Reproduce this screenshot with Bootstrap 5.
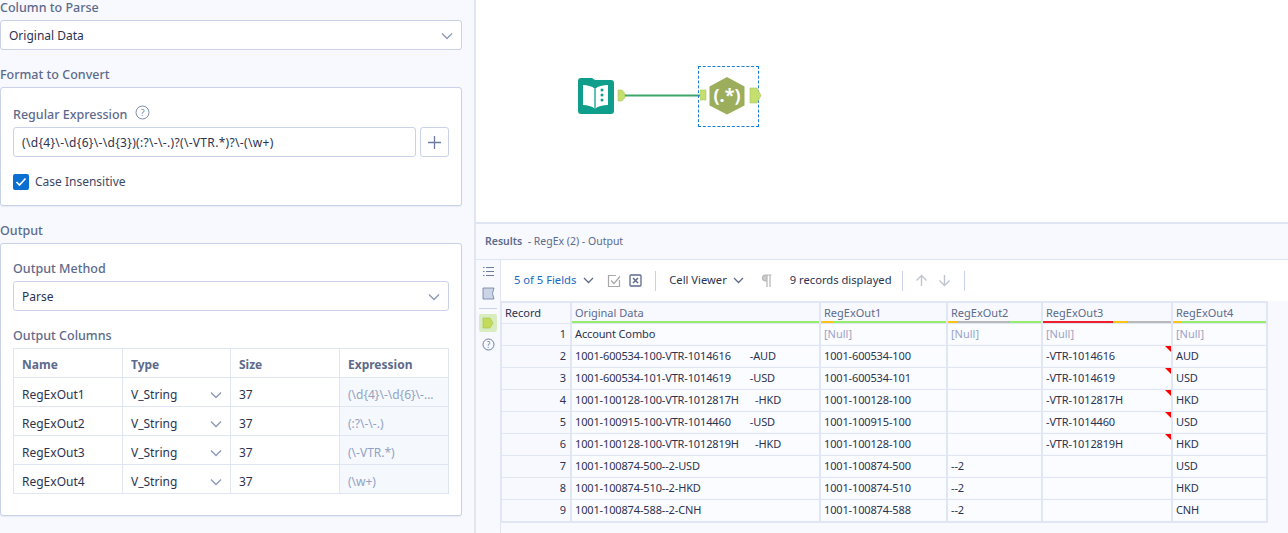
<!DOCTYPE html>
<html lang="en">
<head>
    <meta charset="UTF-8">
    <meta name="viewport" content="width=device-width, initial-scale=1.0">
    <title>RegEx Results</title>
    <link href="https://cdn.jsdelivr.net/npm/bootstrap@5.3.0/dist/css/bootstrap.min.css" rel="stylesheet">
    <style>
        html, body { height: 533px; overflow: hidden; }
        body { font-family: "Noto Sans", "Open Sans", sans-serif; font-size: 12px; color: #2b3350; background: #f7f9fe; }
        .app { width: 1288px; height: 533px; }
        .config { width: 476px; height: 533px; flex: none; padding-right: 12px; border-right: 2px solid #dfe5f1; }
        .sec-label { color: #5d6a8c; font-size: 12.5px; font-weight: 500; line-height: 14px; height: 14px; margin: 0; }
        .field-label { color: #5d6a8c; font-size: 12.5px; font-weight: 500; line-height: 14px; margin: 0 0 5px; }
        .box { background: #fff; border: 1px solid #c9d2e8; border-radius: 3px; height: 30px; padding: 2px 8px 0; line-height: 26px; font-size: 12px; }
        .box svg { flex: none; }
        .panel { background: #fff; border: 1px solid #c9d2e8; border-radius: 3px; padding: 0 12px; box-shadow: 0 1px 1px #e6eaf4; }
        .regex-input { width: 403px; font-size: 12px; letter-spacing: .32px; }
        .plus { width: 29px; height: 30px; margin-left: 4px; }
        .check { width: 16px; height: 16px; background: #0b6ed1; border-radius: 2px; }
        .cols { width: 435px; border-collapse: collapse; table-layout: fixed; font-size: 12px; }
        .cols th, .cols td { border: 1px solid #dfe5f1; height: 29px; padding: 6px 8px 0; white-space: nowrap; }
        .cols th { color: #5d6a8c; font-weight: 700; padding-top: 3px; }
        .cols .expr { background: #f5f8fd; color: #93a2c3; }
        .main { width: 812px; }
        .canvas { height: 222px; background: #fff; position: relative; }
        .node { position: absolute; }
        .results-head { height: 38px; padding-left: 9px; background: #f7f9fe; border-top: 2px solid #dfe5f1; border-bottom: 1px solid #dfe5f1; color: #5d6a8c; font-size: 10.5px; }
        .results-head b { font-weight: 600; }
        .side { width: 25px; flex: none; border-right: 1px solid #dfe5f1; padding-top: 6px; }
        .side hr { width: 18px; margin: 8px 0 5px; border-color: #c9d2e8; opacity: 1; }
        .side .sel { width: 18px; height: 18px; background: #d8ecbf; border-radius: 2px; }
        .toolbar { height: 41px; background: #fff; padding-left: 13px; font-size: 11.2px; }
        .sep { width: 1px; height: 20px; background: #c9d2e8; }
        .fields { color: #1769c2; }
        .grid { border-collapse: collapse; table-layout: fixed; width: 766px; font-size: 11px; line-height: 14px; margin-left: -1px; }
        .grid th, .grid td { border: 2px solid #e0e6f3; height: 22px; padding: 0 3px; white-space: nowrap; position: relative; background: #fbfcff; }
        .grid th { background: #f7f9fe; color: #5d6a8c; font-weight: 400; }
        .grid .rec { background: #f7f9fe; text-align: right; padding-right: 4px; }
        .grid th.rec { text-align: left; color: #2b3350; }
        .grid tbody tr { position: relative; top: -1px; }
        .null { color: #9aa3c7; }
        .bar { position: absolute; left: 0; right: 0; bottom: 0; height: 2px; display: flex; }
        .bar i { display: block; height: 2px; }
        .g { background: #96ee6f; } .y { background: #fcc419; } .s { background: #b9b9b9; } .r { background: #f0202a; }
        .flag::after { content: ""; position: absolute; top: 0; right: 0; border-top: 6px solid #f00; border-left: 6px solid transparent; }
        .pre { white-space: pre; letter-spacing: -.14px; }
    </style>
</head>
<body>
<div class="app d-flex">
    <div class="config">
        <p class="sec-label" style="margin-top:1px">Column to Parse</p>
        <div class="box d-flex justify-content-between align-items-center" style="margin-top:5px">
            <span>Original Data</span>
            <svg width="12" height="8" viewBox="0 0 12 8"><path d="M1 1.500l5 5 5-5" fill="none" stroke="#8a97b5" stroke-width="1.300"/></svg>
        </div>
        <p class="sec-label" style="margin-top:18px">Format to Convert</p>
        <div class="panel" style="height:119px;margin-top:5px">
            <div class="d-flex align-items-center" style="margin-top:20px;height:14px">
                <span class="sec-label">Regular Expression</span>
                <svg class="ms-2" width="15" height="15" viewBox="0 0 15 15" style="margin-top:-5px"><circle cx="7.500" cy="7.500" r="6.500" fill="none" stroke="#7d8bad"/><text x="7.500" y="11" text-anchor="middle" font-size="9.500" fill="#7d8bad">?</text></svg>
            </div>
            <div class="d-flex" style="margin-top:5px">
                <div class="box regex-input">(\d{4}\-\d{6}\-\d{3})(:?\-\-.)?(\-VTR.*)?\-(\w+)</div>
                <div class="box plus d-flex align-items-center justify-content-center p-0">
                    <svg width="15" height="15" viewBox="0 0 15 15"><path d="M7.500 1v13M1 7.500h13" stroke="#6d7b9c" stroke-width="1.300"/></svg>
                </div>
            </div>
            <div class="d-flex align-items-center" style="margin-top:16px">
                <span class="check d-flex align-items-center justify-content-center">
                    <svg width="12" height="10" viewBox="0 0 12 10"><path d="M1.500 5l3 3 6-6.500" fill="none" stroke="#fff" stroke-width="1.700"/></svg>
                </span>
                <span style="color:#3d4866;margin-left:6px">Case Insensitive</span>
            </div>
        </div>
        <p class="sec-label" style="margin-top:18px">Output</p>
        <div class="panel" style="height:273px;margin-top:5px">
            <p class="field-label" style="margin-top:18px">Output Method</p>
            <div class="box d-flex justify-content-between align-items-center">
                <span>Parse</span>
                <svg width="12" height="8" viewBox="0 0 12 8"><path d="M1 1.500l5 5 5-5" fill="none" stroke="#8a97b5" stroke-width="1.300"/></svg>
            </div>
            <p class="field-label" style="margin-top:18px">Output Columns</p>
            <table class="cols">
                <colgroup><col style="width:109px"><col style="width:108px"><col style="width:109px"><col style="width:109px"></colgroup>
                <thead><tr><th>Name</th><th>Type</th><th>Size</th><th>Expression</th></tr></thead>
                <tbody id="colsBody"></tbody>
            </table>
        </div>
    </div>

    <div class="main d-flex flex-column">
        <div class="canvas">
            <svg class="node" style="left:100px;top:75px" width="130" height="42" viewBox="0 0 130 42">
                <path d="M2 6a3 3 0 0 1 3-3h11l3 2h16a3 3 0 0 1 3 3v28a3 3 0 0 1-3 3H5a3 3 0 0 1-3-3z" fill="#0f9e8b"/>
                <path d="M7 10c4 0 9 1 12 4c3-3 8-4 13-4v20c-5 0-10 1-13 4c-3-3-8-4-12-4z" fill="#fff"/>
                <path d="M19 14v20" stroke="#0f9e8b" stroke-width="1.300"/>
                <circle cx="26" cy="15" r="1.500" fill="#0f9e8b"/><circle cx="26" cy="20" r="1.500" fill="#0f9e8b"/><circle cx="26" cy="25" r="1.500" fill="#0f9e8b"/>
                <path d="M42 15h4l3 3.500v4l-3 3.500h-4z" fill="#c5df6e" stroke="#a9c46a" stroke-width=".6"/>
                <path d="M49 20.500h76" stroke="#3fa66b" stroke-width="1.800"/>
            </svg>
            <div class="node" style="left:222px;top:66px;width:61px;height:61px;border:1px dashed #1b7fd1"></div>
            <svg class="node" style="left:224px;top:75px" width="64" height="42" viewBox="0 0 64 42">
                <rect x="0" y="15" width="6" height="10" fill="#c5df6e" stroke="#a9c46a" stroke-width=".6"/>
                <path d="M27 2l17.500 9.500v19L27 39.500 9.500 30.500v-19z" fill="#9cae5c"/>
                <text x="27" y="27" text-anchor="middle" font-size="18" font-weight="700" fill="#fff" font-family="Noto Sans, sans-serif">(.*)</text>
                <path d="M50 13h7l4 7.500-4 7.500h-7z" fill="#c5df6e" stroke="#a9c46a" stroke-width=".6"/>
            </svg>
        </div>
        <div class="results-head d-flex align-items-center"><span><b>Results</b> &nbsp;- RegEx (2) - Output</span></div>
        <div class="d-flex flex-grow-1">
            <div class="side d-flex flex-column align-items-center">
                <svg width="13" height="11" viewBox="0 0 13 11"><path d="M1 1.500h1.500M4 1.500h8M1 5.500h1.500M4 5.500h8M1 9.500h1.500M4 9.500h8" stroke="#6d7b9c"/></svg>
                <svg style="margin-top:10px" width="13" height="13" viewBox="0 0 13 13"><path d="M1 1h11l-1.500 5.500L12 12H1z" fill="#ccd5e8" stroke="#6d7b9c" stroke-width=".8"/></svg>
                <hr>
                <div class="sel d-flex align-items-center justify-content-center">
                    <svg width="12" height="12" viewBox="0 0 12 12"><path d="M1 1h7l3 5-3 5H1z" fill="#c2dc5a" stroke="#a4bd55" stroke-width=".6"/></svg>
                </div>
                <svg width="13" height="13" viewBox="0 0 13 13" style="margin-top:6px"><circle cx="6.500" cy="6.500" r="5.500" fill="none" stroke="#6d7b9c"/><text x="6.500" y="9.500" text-anchor="middle" font-size="8" fill="#6d7b9c">?</text></svg>
            </div>
            <div class="flex-grow-1">
                <div class="toolbar d-flex align-items-center">
                    <span class="fields">5 of 5 Fields</span>
                    <svg style="margin-left:7px" width="11" height="7" viewBox="0 0 11 7"><path d="M1 1l4.500 4.500L10 1" fill="none" stroke="#5d6a8c" stroke-width="1.300"/></svg>
                    <svg style="margin-left:13px" width="14" height="14" viewBox="0 0 14 14"><path d="M12.500 6v6.500h-11v-11H9" fill="none" stroke="#a8a8a8" stroke-width="1.200"/><path d="M4 6.500l3 3 6-7" fill="none" stroke="#a8a8a8" stroke-width="1.200"/></svg>
                    <svg style="margin-left:8px" width="13" height="13" viewBox="0 0 13 13"><rect x="1" y="1" width="11" height="11" rx="1" fill="none" stroke="#5d6a8c" stroke-width="1.300"/><path d="M4 4l5 5M9 4l-5 5" stroke="#5d6a8c" stroke-width="1.500"/></svg>
                    <span class="sep" style="margin-left:13px"></span>
                    <span style="margin-left:13px">Cell Viewer</span>
                    <svg style="margin-left:6px" width="11" height="7" viewBox="0 0 11 7"><path d="M1 1l4.500 4.500L10 1" fill="none" stroke="#5d6a8c" stroke-width="1.300"/></svg>
                    <svg style="margin-left:17px" width="11" height="14" viewBox="0 0 11 14"><path d="M5 1h5.500M6 1v12M9 1v12M6 1H4.500a3 3 0 0 0 0 6H6" fill="#ccc" stroke="#b5b5b5" stroke-width="1.200"/></svg>
                    <span style="margin-left:18px">9 records displayed</span>
                    <span class="sep" style="margin-left:10px"></span>
                    <svg style="margin-left:12px" width="13" height="13" viewBox="0 0 13 13"><path d="M6.500 12V1.500M1.500 6.500l5-5 5 5" fill="none" stroke="#bfc5cf" stroke-width="1.400"/></svg>
                    <svg style="margin-left:10px" width="13" height="13" viewBox="0 0 13 13"><path d="M6.500 1v10.500M1.500 6.500l5 5 5-5" fill="none" stroke="#bfc5cf" stroke-width="1.400"/></svg>
                    <span class="sep" style="margin-left:13px"></span>
                </div>
                <table class="grid">
                    <colgroup><col style="width:70px"><col style="width:249px"><col style="width:127px"><col style="width:95px"><col style="width:130px"><col style="width:95px"></colgroup>
                    <thead>
                        <tr>
                            <th class="rec">Record</th>
                            <th>Original Data<span class="bar"><i class="g" style="width:100%"></i></span></th>
                            <th>RegExOut1<span class="bar"><i class="y" style="width:10%"></i><i class="g" style="width:90%"></i></span></th>
                            <th>RegExOut2<span class="bar"><i class="y" style="width:10%"></i><i class="s" style="width:57%"></i><i class="g" style="width:33%"></i></span></th>
                            <th>RegExOut3<span class="bar"><i class="r" style="width:55%"></i><i class="y" style="width:11%"></i><i class="s" style="width:34%"></i></span></th>
                            <th>RegExOut4<span class="bar"><i class="y" style="width:10%"></i><i class="g" style="width:90%"></i></span></th>
                        </tr>
                    </thead>
                    <tbody id="gridBody"></tbody>
                </table>
            </div>
        </div>
    </div>
</div>

<script>
    const chevron = '<svg width="12" height="8" viewBox="0 0 12 8"><path d="M1 1.500l5 5 5-5" fill="none" stroke="#8a97b5" stroke-width="1.300"/></svg>';
    const exprs = ['(\\d{4}\\-\\d{6}\\-...', '(:?\\-\\-.)', '(\\-VTR.*)', '(\\w+)'];
    document.getElementById('colsBody').innerHTML = exprs.map((expr, i) => `
        <tr>
            <td>RegExOut${i + 1}</td>
            <td><div class="d-flex justify-content-between align-items-center"><span>V_String</span>${chevron}</div></td>
            <td>37</td>
            <td class="expr">${expr}</td>
        </tr>`).join('');

    const rows = [
        ['Account Combo', null, null, null, null],
        ['1001-600534-100-VTR-1014616       -AUD', '1001-600534-100', '', '-VTR-1014616', 'AUD'],
        ['1001-600534-101-VTR-1014619       -USD', '1001-600534-101', '', '-VTR-1014619', 'USD'],
        ['1001-100128-100-VTR-1012817H      -HKD', '1001-100128-100', '', '-VTR-1012817H', 'HKD'],
        ['1001-100915-100-VTR-1014460       -USD', '1001-100915-100', '', '-VTR-1014460', 'USD'],
        ['1001-100128-100-VTR-1012819H      -HKD', '1001-100128-100', '', '-VTR-1012819H', 'HKD'],
        ['1001-100874-500--2-USD', '1001-100874-500', '--2', '', 'USD'],
        ['1001-100874-510--2-HKD', '1001-100874-510', '--2', '', 'HKD'],
        ['1001-100874-588--2-CNH', '1001-100874-588', '--2', '', 'CNH'],
    ];
    document.getElementById('gridBody').innerHTML = rows.map((row, i) => {
        const cells = row.map((v, c) => {
            if (v === null) return '<td class="null">[Null]</td>';
            const flag = c === 3 && v.startsWith('-VTR') ? ' class="flag"' : '';
            return `<td${flag}><span class="pre">${v}</span></td>`;
        }).join('');
        return `<tr><td class="rec">${i + 1}</td>${cells}</tr>`;
    }).join('');
</script>
<script src="https://cdn.jsdelivr.net/npm/bootstrap@5.3.0/dist/js/bootstrap.bundle.min.js"></script>
</body>
</html>
